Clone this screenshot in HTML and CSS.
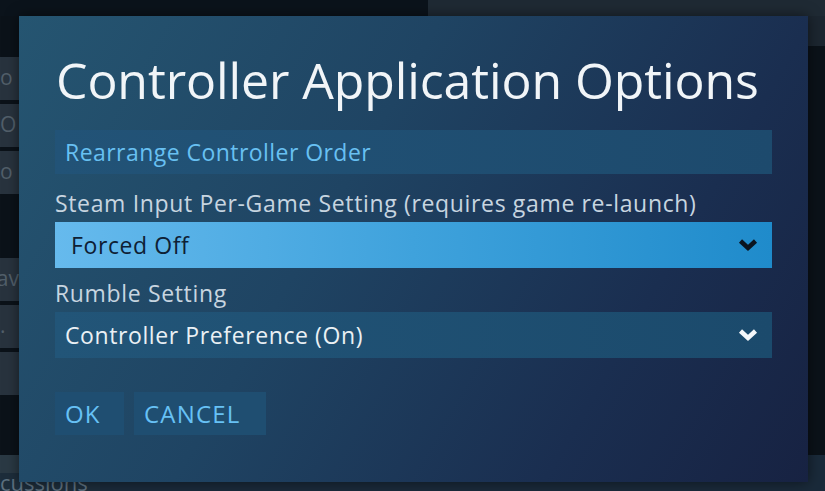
FILE: index.html
```html
<!DOCTYPE html>
<html>

<head>
  <title>Controller Application Options</title>
  <link rel="stylesheet" href="styles.css">
</head>

<body>
  <div class="library">
    <!-- Library page behind the modal -->
    <div class="page-top">
      <div class="page-top-dark"></div>
      <div class="page-top-tab"></div>
    </div>
    <div class="page-mid">
      <aside class="rail">
        <div class="rail-tile">o</div>
        <div class="rail-tile">O</div>
        <div class="rail-tile">o</div>
        <div class="rail-gap"></div>
        <div class="rail-tile">av</div>
        <div class="rail-tile">.</div>
        <div class="rail-tile"></div>
      </aside>
      <div class="page-body"></div>
      <div class="page-side">
        <div class="page-side-tab"></div>
      </div>
    </div>
    <div class="page-foot">
      <div class="foot-link">cussions</div>
    </div>
  </div>

  <div class="modal">
    <h1 class="modal-title">Controller Application Options</h1>

    <button class="wide-btn">Rearrange Controller Order</button>

    <label class="field-label">Steam Input Per-Game Setting (requires game re-launch)</label>
    <div class="dropdown dropdown-active">
      <span>Forced Off</span>
      <svg class="chevron" width="20" height="14" viewBox="0 0 20 14">
        <polyline points="2.5,3 10,10 17.5,3" />
      </svg>
    </div>

    <label class="field-label field-label-second">Rumble Setting</label>
    <div class="dropdown">
      <span>Controller Preference (On)</span>
      <svg class="chevron" width="20" height="14" viewBox="0 0 20 14">
        <polyline points="2.5,3 10,10 17.5,3" />
      </svg>
    </div>

    <div class="modal-actions">
      <button class="action-btn action-ok">OK</button>
      <button class="action-btn action-cancel">CANCEL</button>
    </div>
  </div>
</body>

</html>
```

FILE: styles.css
```css
body, html {
  margin: 0;
  padding: 0;
}

body {
  width: 825px;
  height: 491px;
  overflow: hidden;
  position: relative;
  background: #0b1219;
  font-family: "Open Sans", "Noto Sans", sans-serif;
}

/* ---------- library behind the dialog ---------- */
.library {
  display: flex;
  flex-direction: column;
  height: 100%;
}

.page-top {
  height: 16px;
  display: flex;
}

.page-top-dark {width: 428px; background: #0b131b;}
.page-top-tab {flex: 1; background: #1f2a34;}

.page-mid {
  flex: 1;
  display: flex;
}

.rail {
  width: 19px;
  padding-top: 41px;
  display: flex;
  flex-direction: column;
  gap: 4px;
  overflow: hidden;
}

.rail-gap {height: 56px;}

.rail-tile {
  height: 43px;
  background: #28333e;
  color: #525f6a;
  font-size: 21px;
  line-height: 41px;
  white-space: nowrap;
  direction: rtl;
  text-align: left;
}

.page-body {flex: 1; background: #0c141c;}

.page-side {width: 17px; background: #0b1219;}
.page-side-tab {height: 30px; background: #1c2630;}

.page-foot {
  height: 36px;
  display: flex;
  background: #1a2a3a;
}

.foot-link {
  width: 100px;
  padding-top: 16px;
  font-size: 22px;
  line-height: 22px;
  color: #5c6f7e;
  background: linear-gradient(180deg, #2a3944 0 18px, #1d2d3b 18px);
}

/* ---------- modal ---------- */
.modal {
  position: absolute;
  left: 19px;
  top: 16px;
  width: 789px;
  height: 466px;
  box-sizing: border-box;
  padding: 35px 36px 0 36px;
  background: linear-gradient(120deg, #255571 0%, #1f4463 40%, #1a2e50 75%, #172242 100%);
  box-shadow: 0 0 12px rgba(0, 0, 0, 0.5);
}

.modal-title {
  margin: 0 0 21px 1px;
  font-size: 50px;
  font-weight: 400;
  line-height: 58px;
  letter-spacing: -0.1px;
  white-space: nowrap;
  color: #f1f5f8;
}

.wide-btn {
  display: block;
  width: 100%;
  height: 44px;
  border: none;
  padding: 0 10px;
  text-align: left;
  font-family: inherit;
  font-size: 23px;
  letter-spacing: 0.45px;
  color: #68c0f2;
  background: linear-gradient(90deg, #225377, #1d4a6d);
}

.field-label {
  display: block;
  margin-top: 15px;
  height: 33px;
  font-size: 23px;
  line-height: 28px;
  letter-spacing: 0.65px;
  color: #c7d5e0;
}

.field-label-second {margin-top: 11px;}

.dropdown {
  height: 46px;
  display: flex;
  align-items: center;
  justify-content: space-between;
  padding: 0 14px 0 10px;
  font-size: 23px;
  letter-spacing: 0.6px;
  color: #eaf0f4;
  background: linear-gradient(90deg, #225578, #1b4a6c);
}

.dropdown-active {
  padding-left: 16px;
  color: #0e2034;
  background: linear-gradient(90deg, #66baed, #3fa2dc 50%, #1f8bcb);
}

.chevron polyline {
  fill: none;
  stroke: #f4f7fa;
  stroke-width: 4.5;
}

.dropdown-active .chevron polyline {stroke: #0a1420;}

.modal-actions {
  display: flex;
  gap: 10px;
  margin-top: 34px;
}

.action-btn {
  height: 43px;
  border: none;
  padding: 0 0 0 10px;
  text-align: left;
  font-family: inherit;
  font-size: 24px;
  letter-spacing: 1.2px;
  color: #67c1f5;
  background: #1f4e71;
}

.action-ok {width: 69px;}
.action-cancel {width: 132px;}
```
